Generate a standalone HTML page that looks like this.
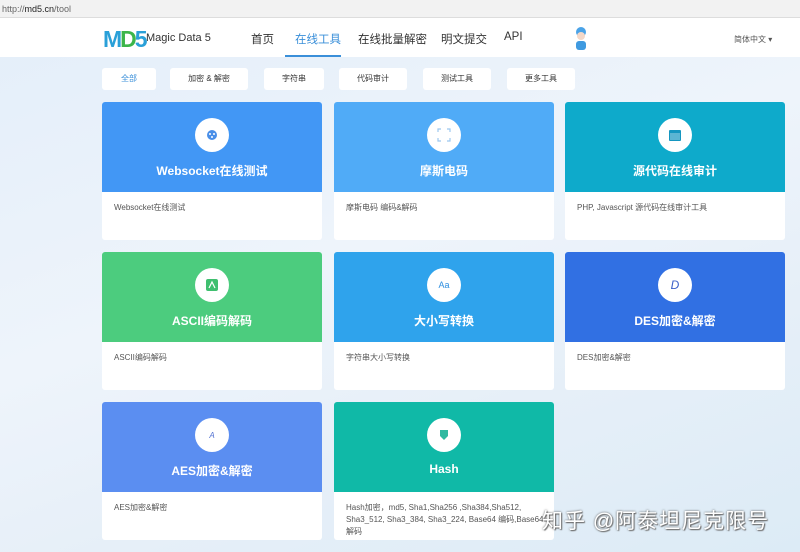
<!DOCTYPE html>
<html><head><meta charset="utf-8"><style>
*{margin:0;padding:0;box-sizing:border-box}
body{width:800px;height:552px;overflow:hidden;font-family:"Liberation Sans","Noto Sans CJK SC",sans-serif;background:linear-gradient(160deg,#e3eef9 0%,#eef4fb 45%,#e6eff8 70%,#dcebf6 100%);position:relative}
.addr{height:18px;background:#f2f2f2;border-bottom:1px solid #ddd;font-size:9px;color:#666;line-height:18px;padding-left:2px}
.nav{height:39px;background:#fff;position:relative}
.logo{position:absolute;left:103px;top:8px;font-weight:bold;font-size:23px;color:#2aa0d8;letter-spacing:-2px}
.logo b{color:#3cb54a}
.brand{position:absolute;left:146px;top:14px;font-size:11px;color:#333}
.nav a{position:absolute;top:13px;font-size:11.5px;color:#333;text-decoration:none}
.nav .act{color:#3a8fd9}
.ul{position:absolute;left:285px;top:55px;width:56px;height:2px;background:#3a8fd9}
.lang{position:absolute;left:734px;top:16px;font-size:8px;color:#555}
.av{position:absolute;left:573px;top:8px;width:16px;height:24px}
.f{position:absolute;top:68px;height:22px;background:#fff;border-radius:3px;font-size:8px;color:#333;text-align:center;line-height:22px}
.card{position:absolute;width:220px;height:138px;background:#fff;border-radius:3px;overflow:hidden}
.top{height:90px;position:relative;color:#fff;text-align:center}
.c{position:absolute;left:93px;top:16px;width:34px;height:34px;border-radius:50%;background:#fff;display:flex;align-items:center;justify-content:center}
.t{position:absolute;left:0;right:0;top:60px;font-size:12px;font-weight:bold}
.d{padding:10px 6px 10px 12px;font-size:8px;color:#555;line-height:12px}
.wm{position:absolute;left:542px;top:505px;font-size:21px;color:#fff;text-shadow:0 0 2px #555,1px 1px 1px #777;letter-spacing:1px}
</style></head><body>
<div class="addr">http://<span style="color:#222">md5.cn</span>/tool</div>
<div class="nav">
<div class="logo">M<b>D</b>5</div><div class="brand">Magic Data 5</div>
<a style="left:251px">首页</a><a class="act" style="left:295px">在线工具</a><a style="left:358px">在线批量解密</a><a style="left:441px">明文提交</a><a style="left:504px">API</a>
<svg class="av" viewBox="0 0 16 24"><circle cx="8" cy="6" r="5" fill="#4aa3e8"/><circle cx="8" cy="10" r="4" fill="#f4d8c8"/><rect x="3" y="15" width="10" height="9" rx="3" fill="#3f9ae0"/></svg>
<div class="lang">简体中文 ▾</div>
</div>
<div class="ul"></div>
<div class="f" style="left:102px;width:54px;color:#3a8fd9">全部</div>
<div class="f" style="left:170px;width:78px">加密 &amp; 解密</div>
<div class="f" style="left:264px;width:60px">字符串</div>
<div class="f" style="left:339px;width:68px">代码审计</div>
<div class="f" style="left:423px;width:68px">测试工具</div>
<div class="f" style="left:507px;width:68px">更多工具</div>

<div class="card" style="left:102px;top:102px"><div class="top" style="background:#4297f5"><div class="c"><svg width="12" height="12" viewBox="0 0 12 12"><circle cx="6" cy="6" r="5" fill="#4a8fe8"/><circle cx="4" cy="5" r="1" fill="#fff"/><circle cx="8" cy="5" r="1" fill="#fff"/><circle cx="6" cy="8" r="1" fill="#fff"/></svg></div><div class="t">Websocket在线测试</div></div><div class="d">Websocket在线测试</div></div>
<div class="card" style="left:334px;top:102px"><div class="top" style="background:#50abf7"><div class="c"><svg width="14" height="14" viewBox="0 0 14 14" fill="none" stroke="#9cc8ef" stroke-width="1.2"><path d="M1 4V1h3M10 1h3v3M13 10v3h-3M4 13H1v-3"/></svg></div><div class="t">摩斯电码</div></div><div class="d">摩斯电码 编码&amp;解码</div></div>
<div class="card" style="left:565px;top:102px"><div class="top" style="background:#0eaacb"><div class="c"><svg width="12" height="11" viewBox="0 0 12 11"><rect width="12" height="11" rx="1" fill="#1596c0"/><rect x="1" y="3" width="10" height="7" fill="#fff" opacity=".3"/></svg></div><div class="t">源代码在线审计</div></div><div class="d">PHP, Javascript 源代码在线审计工具</div></div>
<div class="card" style="left:102px;top:252px"><div class="top" style="background:#4ccc7e"><div class="c"><svg width="12" height="12" viewBox="0 0 12 12"><rect width="12" height="12" rx="2" fill="#3fbf6f"/><path d="M3 9L6 3L9 9" stroke="#fff" fill="none" stroke-width="1.2"/></svg></div><div class="t">ASCII编码解码</div></div><div class="d">ASCII编码解码</div></div>
<div class="card" style="left:334px;top:252px"><div class="top" style="background:#2fa3ec"><div class="c"><span style="color:#2f8fe0;font-size:9px">Aa</span></div><div class="t">大小写转换</div></div><div class="d">字符串大小写转换</div></div>
<div class="card" style="left:565px;top:252px"><div class="top" style="background:#3170e3"><div class="c"><span style="color:#3b5fc8;font-size:12px;font-style:italic">D</span></div><div class="t">DES加密&amp;解密</div></div><div class="d">DES加密&amp;解密</div></div>
<div class="card" style="left:102px;top:402px"><div class="top" style="background:#5b8ef1"><div class="c"><span style="color:#4f6fd0;font-size:8px;font-style:italic">A</span></div><div class="t">AES加密&amp;解密</div></div><div class="d">AES加密&amp;解密</div></div>
<div class="card" style="left:334px;top:402px"><div class="top" style="background:#10b9a7"><div class="c"><svg width="10" height="12" viewBox="0 0 10 12"><path d="M1 1h8v6l-4 4-4-4z" fill="#30b9a0"/></svg></div><div class="t">Hash</div></div><div class="d">Hash加密，md5, Sha1,Sha256 ,Sha384,Sha512, Sha3_512, Sha3_384, Sha3_224, Base64 编码,Base64 解码</div></div>
<div class="wm">知乎 @阿泰坦尼克限号</div>
</body></html>
